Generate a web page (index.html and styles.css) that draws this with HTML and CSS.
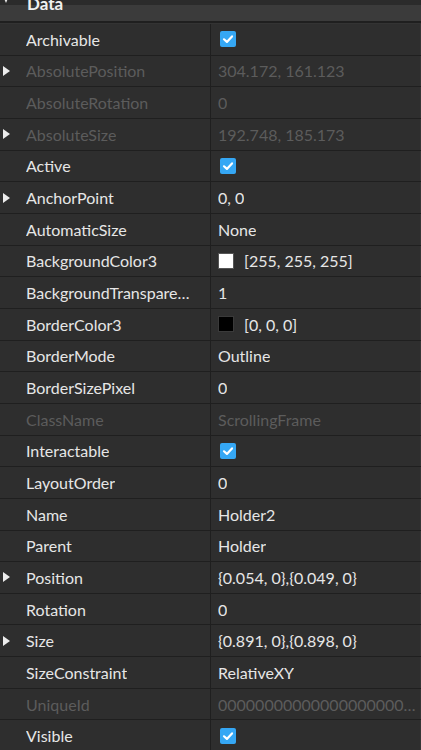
FILE: index.html
```html
<!DOCTYPE html>
<html>
<head>
<meta charset="utf-8">
<link rel="stylesheet" href="styles.css">
</head>
<body>
<div class="panel">
  <div class="section-header">
    <span class="caret-down"></span>
    <span class="section-title">Data</span>
  </div>
  <div class="rows">
    <div class="row"><div class="name"><span class="gutter"></span><span class="label">Archivable</span></div><div class="value"><span class="check"><svg viewBox="0 0 16 16" width="16" height="16"><path d="M4 8.3 L6.9 10.9 L12 5.4" fill="none" stroke="#fff" stroke-width="2.2" stroke-linecap="round" stroke-linejoin="round"/></svg></span></div></div>
    <div class="row off"><div class="name"><span class="gutter"><span class="tri"></span></span><span class="label">AbsolutePosition</span></div><div class="value"><span class="text">304.172, 161.123</span></div></div>
    <div class="row off"><div class="name"><span class="gutter"></span><span class="label">AbsoluteRotation</span></div><div class="value"><span class="text">0</span></div></div>
    <div class="row off"><div class="name"><span class="gutter"><span class="tri"></span></span><span class="label">AbsoluteSize</span></div><div class="value"><span class="text">192.748, 185.173</span></div></div>
    <div class="row"><div class="name"><span class="gutter"></span><span class="label">Active</span></div><div class="value"><span class="check"><svg viewBox="0 0 16 16" width="16" height="16"><path d="M4 8.3 L6.9 10.9 L12 5.4" fill="none" stroke="#fff" stroke-width="2.2" stroke-linecap="round" stroke-linejoin="round"/></svg></span></div></div>
    <div class="row"><div class="name"><span class="gutter"><span class="tri"></span></span><span class="label">AnchorPoint</span></div><div class="value"><span class="text">0, 0</span></div></div>
    <div class="row"><div class="name"><span class="gutter"></span><span class="label">AutomaticSize</span></div><div class="value"><span class="text">None</span></div></div>
    <div class="row"><div class="name"><span class="gutter"></span><span class="label">BackgroundColor3</span></div><div class="value"><span class="swatch white"></span><span class="text">[255, 255, 255]</span></div></div>
    <div class="row"><div class="name"><span class="gutter"></span><span class="label">BackgroundTransparency</span></div><div class="value"><span class="text">1</span></div></div>
    <div class="row"><div class="name"><span class="gutter"></span><span class="label">BorderColor3</span></div><div class="value"><span class="swatch black"></span><span class="text">[0, 0, 0]</span></div></div>
    <div class="row"><div class="name"><span class="gutter"></span><span class="label">BorderMode</span></div><div class="value"><span class="text">Outline</span></div></div>
    <div class="row"><div class="name"><span class="gutter"></span><span class="label">BorderSizePixel</span></div><div class="value"><span class="text">0</span></div></div>
    <div class="row off"><div class="name"><span class="gutter"></span><span class="label">ClassName</span></div><div class="value"><span class="text">ScrollingFrame</span></div></div>
    <div class="row"><div class="name"><span class="gutter"></span><span class="label">Interactable</span></div><div class="value"><span class="check"><svg viewBox="0 0 16 16" width="16" height="16"><path d="M4 8.3 L6.9 10.9 L12 5.4" fill="none" stroke="#fff" stroke-width="2.2" stroke-linecap="round" stroke-linejoin="round"/></svg></span></div></div>
    <div class="row"><div class="name"><span class="gutter"></span><span class="label">LayoutOrder</span></div><div class="value"><span class="text">0</span></div></div>
    <div class="row"><div class="name"><span class="gutter"></span><span class="label">Name</span></div><div class="value"><span class="text">Holder2</span></div></div>
    <div class="row"><div class="name"><span class="gutter"></span><span class="label">Parent</span></div><div class="value"><span class="text">Holder</span></div></div>
    <div class="row"><div class="name"><span class="gutter"><span class="tri"></span></span><span class="label">Position</span></div><div class="value"><span class="text">{0.054, 0},{0.049, 0}</span></div></div>
    <div class="row"><div class="name"><span class="gutter"></span><span class="label">Rotation</span></div><div class="value"><span class="text">0</span></div></div>
    <div class="row"><div class="name"><span class="gutter"><span class="tri"></span></span><span class="label">Size</span></div><div class="value"><span class="text">{0.891, 0},{0.898, 0}</span></div></div>
    <div class="row"><div class="name"><span class="gutter"></span><span class="label">SizeConstraint</span></div><div class="value"><span class="text">RelativeXY</span></div></div>
    <div class="row off"><div class="name"><span class="gutter"></span><span class="label">UniqueId</span></div><div class="value"><span class="text">00000000000000000000000000000000</span></div></div>
    <div class="row"><div class="name"><span class="gutter"></span><span class="label">Visible</span></div><div class="value"><span class="check"><svg viewBox="0 0 16 16" width="16" height="16"><path d="M4 8.3 L6.9 10.9 L12 5.4" fill="none" stroke="#fff" stroke-width="2.2" stroke-linecap="round" stroke-linejoin="round"/></svg></span></div></div>
  </div>
</div>
</body>
</html>
```

FILE: styles.css
```css
html, body {
  margin: 0;
  padding: 0;
  background: #2e2e2e;
  overflow: hidden;
}

.panel {
  width: 421px;
  height: 750px;
  overflow: hidden;
  background: #2e2e2e;
  box-shadow: inset -1px 0 0 #363636;
  font-family: Lato, "Noto Sans", sans-serif;
  font-size: 16px;
  color: #e6e6e6;
}

.section-header {
  height: 24px;
  box-sizing: border-box;
  display: flex;
  align-items: flex-start;
  overflow: hidden;
  background: linear-gradient(#2b2b2b 0 5px, #3b3b3b 5px 21px, #1f1f1f 21px 23px, #333 23px);
}

.caret-down {
  width: 0;
  height: 0;
  margin: -6px 0 0 2px;
  border-left: 4px solid transparent;
  border-right: 4px solid transparent;
  border-top: 9px solid #e8e8e8;
}

.section-title {
  margin: -7px 0 0 17px;
  font-weight: 700;
  font-size: 17px;
  line-height: 22px;
  color: #f0f0f0;
}

.rows {
  display: flex;
  flex-direction: column;
}

.row {
  height: 31.67px;
  flex: none;
  box-sizing: border-box;
  border-bottom: 1px solid #1f1f1f;
  display: flex;
  align-items: stretch;
}

.name {
  width: 211px;
  flex: none;
  box-sizing: border-box;
  border-right: 1px solid #1f1f1f;
  display: flex;
  align-items: center;
  padding-right: 16px;
  min-width: 0;
}

.gutter {
  width: 26px;
  flex: none;
  display: flex;
  align-items: center;
}

.tri {
  width: 0;
  height: 0;
  margin-left: 3px;
  border-top: 5px solid transparent;
  border-bottom: 5px solid transparent;
  border-left: 7px solid #ececec;
}

.label {
  white-space: nowrap;
  overflow: hidden;
  text-overflow: ellipsis;
  min-width: 0;
}

.value {
  flex: 1;
  min-width: 0;
  display: flex;
  align-items: center;
  padding-left: 7px;
  gap: 10px;
}

.value .text {
  white-space: nowrap;
  overflow: hidden;
  text-overflow: ellipsis;
  min-width: 0;
}

.row.off .label,
.row.off .value .text {
  color: #5c5c5c;
}

.check {
  width: 16px;
  height: 16px;
  margin-left: 2px;
  border-radius: 2px;
  background: #35a7f4;
  display: flex;
}

.swatch {
  width: 16px;
  height: 16px;
  box-sizing: border-box;
  border: 1px solid #555;
  flex: none;
}

.swatch.white { background: #fff; }
.swatch.black { background: #000; border-color: #3a3a3a; }
```
